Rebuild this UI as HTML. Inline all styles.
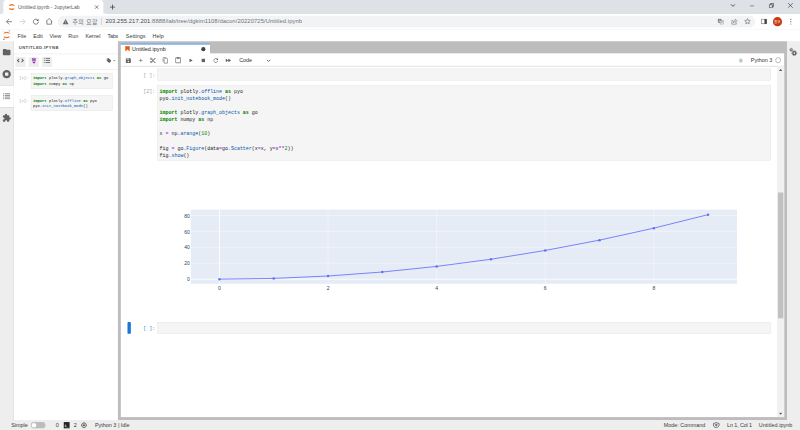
<!DOCTYPE html>
<html lang="ko">
<head>
<meta charset="utf-8">
<title>Untitled.ipynb - JupyterLab</title>
<style>
html,body{margin:0;padding:0;background:#fff;overflow:hidden;}
body{width:800px;height:430px;position:relative;}
#root{position:absolute;left:0;top:0;width:1920px;height:1032px;transform:scale(0.4166667);transform-origin:0 0;background:#fff;overflow:hidden;
 font-family:"Liberation Sans","Noto Sans CJK KR",sans-serif;font-size:13px;color:#212121;}
#root *{box-sizing:border-box;}
.abs{position:absolute;}
.t{position:absolute;white-space:nowrap;line-height:1;}
/* chrome */
#tabstrip{left:0;top:0;width:1920px;height:34px;background:#dee1e6;}
#ctab{left:8px;top:0;width:240px;height:34px;background:#fff;border-radius:8px 8px 0 0;}
#ctoolbar{left:0;top:34px;width:1920px;height:37px;background:#fff;border-bottom:1px solid #e4e6e9;}
#omni{left:139px;top:38px;width:1673px;height:28px;border-radius:14px;background:#f1f3f4;}
/* jlab */
#menubar{left:0;top:71px;width:1920px;height:28px;background:#fff;}
.mi{top:80px;font-size:13px;color:#3c3c3c;}
#lside{left:0;top:99px;width:33px;height:909px;background:#eeeeee;border-right:1px solid #bdbdbd;}
#rside{left:1889px;top:99px;width:31px;height:909px;background:#eeeeee;}
#lpanel{left:33px;top:99px;width:250px;height:909px;background:#fff;}
#dock{left:283px;top:99px;width:1606px;height:909px;background:#bdbdbd;}
#nbpanel{left:290px;top:128px;width:1592px;height:873px;background:#fff;}
#status{left:0;top:1008px;width:1920px;height:24px;background:#eeeeee;}
.st{top:1014px;font-size:13px;color:#3a3a3a;}
.mono{font-family:"Liberation Mono",monospace;}
.code{position:absolute;white-space:pre;font-family:"Liberation Mono",monospace;font-size:11.9px;line-height:17px;color:#212121;letter-spacing:0;}
.k{color:#008000;font-weight:bold;}
.o{color:#aa22ff;font-weight:bold;}
.p{color:#0055aa;}
.n{color:#008800;}
.tcode{position:absolute;white-space:pre;font-family:"Liberation Mono",monospace;font-size:9.15px;line-height:13.700px;color:#212121;}
.cellbox{position:absolute;background:#f5f5f5;border:1px solid #e3e3e3;}
.prompt{position:absolute;white-space:pre;font-family:"Liberation Mono",monospace;font-size:11.9px;line-height:17px;color:#9e9e9e;}
</style>
</head>
<body>
<div id="root">
<!-- CHROME-BEGIN -->
<div class="abs" id="tabstrip"></div>
<div class="abs" id="ctab"></div>
<!-- tab curves -->
<svg class="abs" style="left:0;top:26px" width="8" height="8"><path d="M8 0 V8 H0 A8 8 0 0 0 8 0Z" fill="#fff"/></svg>
<svg class="abs" style="left:248px;top:26px" width="8" height="8"><path d="M0 0 V8 H8 A8 8 0 0 1 0 0Z" fill="#fff"/></svg>
<!-- favicon: jupyter -->
<svg class="abs" style="left:20px;top:9px" width="16" height="16" viewBox="0 0 16 16">
 <path d="M0.600 6 A7.700 7.700 0 0 1 15.400 6 Q8 2.700 0.600 6Z" fill="#f37726"/>
 <path d="M0.600 10 A7.700 7.700 0 0 0 15.400 10 Q8 13.300 0.600 10Z" fill="#f37726"/>
</svg>
<div class="t" style="left:43px;top:11px;font-size:12px;color:#50545a;letter-spacing:0.200px">Untitled.ipynb - JupyterLab</div>
<svg class="abs" style="left:225px;top:10px" width="14" height="14" viewBox="0 0 14 14"><path d="M3 3 L11 11 M11 3 L3 11" stroke="#3c4043" stroke-width="1.5" fill="none"/></svg>
<svg class="abs" style="left:262px;top:9px" width="16" height="16" viewBox="0 0 16 16"><path d="M8 2 V14 M2 8 H14" stroke="#3c4043" stroke-width="1.8" fill="none"/></svg>
<!-- window controls -->
<svg class="abs" style="left:1752px;top:7px" width="14" height="12" viewBox="0 0 14 12"><path d="M2.200 3.500 L7 8.300 L11.800 3.500" stroke="#303336" stroke-width="1.900" fill="none"/></svg>
<svg class="abs" style="left:1799px;top:8px" width="12" height="12" viewBox="0 0 12 12"><path d="M1 6 H11" stroke="#3c4043" stroke-width="1.2" fill="none"/></svg>
<svg class="abs" style="left:1845px;top:7px" width="13" height="13" viewBox="0 0 14 14"><path d="M1.5 4.5 H9.5 V12.5 H1.5Z M4.5 4.5 V1.5 H12.5 V9.5 H9.5" stroke="#202124" stroke-width="1.4" fill="none"/></svg>
<svg class="abs" style="left:1890px;top:6px" width="14" height="14" viewBox="0 0 14 14"><path d="M1.5 1.5 L12.5 12.5 M12.5 1.5 L1.5 12.5" stroke="#202124" stroke-width="1.4" fill="none"/></svg>
<div class="abs" id="ctoolbar"></div>
<!-- nav icons -->
<svg class="abs" style="left:13px;top:43px" width="18" height="18" viewBox="0 0 18 18"><path d="M16 9 H3 M9 2.5 L2.5 9 L9 15.5" stroke="#5f6368" stroke-width="1.8" fill="none"/></svg>
<svg class="abs" style="left:45px;top:43px" width="18" height="18" viewBox="0 0 18 18"><path d="M2 9 H15 M9 2.5 L15.5 9 L9 15.5" stroke="#c4c7c9" stroke-width="1.8" fill="none"/></svg>
<svg class="abs" style="left:77px;top:43px" width="18" height="18" viewBox="0 0 18 18"><path d="M15 9 A6 6 0 1 1 12.800 4.400" stroke="#5f6368" stroke-width="2" fill="none"/><path d="M15.5 2 V7.5 H10Z" fill="#5f6368"/></svg>
<svg class="abs" style="left:109px;top:42px" width="18" height="18" viewBox="0 0 18 18"><path d="M3.5 8.5 V16 H14.5 V8.5 M1.5 9.5 L9 2.5 L16.5 9.5" stroke="#5f6368" stroke-width="1.8" fill="none"/></svg>
<div class="abs" id="omni"></div>
<svg class="abs" style="left:150px;top:45px" width="15" height="14" viewBox="0 0 15 14"><path d="M7.5 0.5 L14.8 13.5 H0.2Z" fill="#5f6368"/><path d="M7.5 5 V9.2 M7.5 10.4 V12" stroke="#f1f3f4" stroke-width="1.4"/></svg>
<div class="t" style="left:174px;top:43px;font-size:14px;line-height:18px;color:#6e7276;letter-spacing:1.100px">주의 요함</div>
<div class="abs" style="left:243px;top:43px;width:1px;height:17px;background:#a8acb1"></div>
<div class="t" style="left:253px;top:43px;font-size:14px;line-height:16px;letter-spacing:0.19px;color:#45494d">203.255.217.201<span style="color:#6f7479">:8888/lab/tree/dgkim1108/dacon/20220725/Untitled.ipynb</span></div>
<!-- omnibox right icons -->
<svg class="abs" style="left:1722px;top:44px" width="15" height="15" viewBox="0 0 18 18" opacity="0.850"><rect x="1" y="1.5" width="10" height="11" fill="#5f6368"/><rect x="7.5" y="6" width="9.5" height="11" fill="#f1f3f4" stroke="#5f6368" stroke-width="1.3"/><path d="M9.5 9 H15 M12.2 9 V8 M10 14.5 C12.5 13.5 13.8 11.5 14 9.3 M10.5 10.5 C11.2 12.5 12.8 13.8 15 14.5" stroke="#5f6368" stroke-width="1" fill="none"/><path d="M3.5 10.5 L6 4 L8.5 10.5 M4.3 8.5 H7.7" stroke="#f1f3f4" stroke-width="1.1" fill="none"/></svg>
<svg class="abs" style="left:1754px;top:43px" width="17" height="17" viewBox="0 0 18 18"><path d="M6 6.500 H2.500 V16 H14 V12.500" stroke="#5f6368" stroke-width="1.300" fill="none"/><path d="M5.5 12.5 C6 8.5 8.5 6.5 11.5 6.3 V3 L16.5 7.8 L11.5 12.3 V9.2 C9 9.2 7 10.2 5.5 12.5Z" stroke="#5f6368" stroke-width="1.200" fill="none"/></svg>
<svg class="abs" style="left:1786px;top:43px" width="16" height="16" viewBox="0 0 18 18"><path d="M9 1.8 L11.2 6.7 L16.5 7.2 L12.5 10.8 L13.7 16 L9 13.2 L4.3 16 L5.5 10.8 L1.5 7.2 L6.8 6.7Z" stroke="#5f6368" stroke-width="1.6" fill="none" stroke-linejoin="round"/></svg>
<svg class="abs" style="left:1826px;top:45px" width="15" height="13" viewBox="0 0 18 16"><rect x="1" y="1" width="16" height="14" rx="1.5" stroke="#3c4043" stroke-width="1.8" fill="none"/><rect x="10.5" y="1" width="6.5" height="14" fill="#3c4043"/></svg>
<div class="abs" style="left:1855px;top:41px;width:22px;height:22px;border-radius:11px;background:#c9390f;"></div>
<div class="t" style="left:1858px;top:48px;font-size:8px;color:#fff;letter-spacing:0">동규</div>
<svg class="abs" style="left:1895px;top:44px" width="6" height="16" viewBox="0 0 6 16"><circle cx="3" cy="2.500" r="1.350" fill="#5f6368"/><circle cx="3" cy="8" r="1.350" fill="#5f6368"/><circle cx="3" cy="13.500" r="1.350" fill="#5f6368"/></svg>
<!-- CHROME-END -->
<!-- JLAB-BEGIN -->
<div class="abs" id="menubar"></div>
<!-- jupyter logo -->
<svg class="abs" style="left:6px;top:72px" width="20" height="24" viewBox="0 0 20 22" preserveAspectRatio="none">
 <path d="M2.2 8.6 A8 6.2 0 0 1 17.8 8.6 A10.5 4.2 0 0 0 2.2 8.6Z" fill="#f37726"/>
 <path d="M2.2 13.6 A8 6.2 0 0 0 17.8 13.6 A10.5 4.2 0 0 1 2.2 13.6Z" fill="#f37726"/>
 <circle cx="16.2" cy="1.8" r="1.3" fill="#767677"/><circle cx="3.4" cy="20.2" r="1.6" fill="#616262"/><circle cx="2.6" cy="3.4" r="0.9" fill="#989798"/>
</svg>
<div class="t mi" style="left:42px">File</div>
<div class="t mi" style="left:80px">Edit</div>
<div class="t mi" style="left:119px">View</div>
<div class="t mi" style="left:164px">Run</div>
<div class="t mi" style="left:205px;letter-spacing:-0.3px">Kernel</div>
<div class="t mi" style="left:258px;letter-spacing:-0.5px">Tabs</div>
<div class="t mi" style="left:302px">Settings</div>
<div class="t mi" style="left:366px">Help</div>
<!-- left sidebar -->
<div class="abs" id="lside"></div>
<div class="abs" style="left:0;top:204px;width:33px;height:54px;background:#fff;border-top:1px solid #bdbdbd;border-bottom:1px solid #bdbdbd;"></div>
<svg class="abs" style="left:5px;top:114px" width="22" height="22" viewBox="0 0 24 24"><path fill="#616161" d="M10 4H4c-1.1 0-1.99.9-1.99 2L2 18c0 1.1.9 2 2 2h16c1.1 0 2-.9 2-2V8c0-1.1-.9-2-2-2h-8l-2-2z"/></svg>
<svg class="abs" style="left:4px;top:166px" width="24" height="24" viewBox="0 0 24 24"><path fill="#616161" d="M12 2C6.48 2 2 6.48 2 12s4.48 10 10 10 10-4.48 10-10S17.52 2 12 2zm4 14H8V8h8v8z"/></svg>
<svg class="abs" style="left:7px;top:223px" width="18" height="16" viewBox="0 0 18 16"><path d="M4.500 2 H17.500 M4.500 6 H17.500 M4.500 10 H17.500 M4.500 14 H17.500" stroke="#616161" stroke-width="1.700"/><path d="M0.500 2 H2.800 M0.500 6 H2.800 M0.500 10 H2.800 M0.500 14 H2.800" stroke="#616161" stroke-width="1.700"/></svg>
<svg class="abs" style="left:5px;top:272px" width="22" height="22" viewBox="0 0 24 24"><path fill="#616161" d="M20.500 11H19V7c0-1.100-.9-2-2-2h-4V3.500C13 2.120 11.880 1 10.500 1S8 2.120 8 3.500V5H4c-1.100 0-1.990.9-1.990 2v3.800H3.500c1.490 0 2.700 1.210 2.700 2.700s-1.210 2.700-2.700 2.700H2V20c0 1.100.9 2 2 2h3.800v-1.500c0-1.490 1.210-2.700 2.700-2.700 1.490 0 2.700 1.210 2.700 2.700V22H17c1.100 0 2-.9 2-2v-4h1.500c1.380 0 2.500-1.120 2.500-2.500S21.880 11 20.500 11z"/></svg>
<!-- left panel (toc) -->
<div class="abs" id="lpanel"></div>
<div class="t" style="left:45px;top:109.500px;font-size:10px;font-weight:bold;letter-spacing:0.950px;color:#505050">UNTITLED.IPYNB</div>
<div class="abs" style="left:33px;top:128.500px;width:250px;height:1px;background:#e0e0e0"></div>
<div class="abs" style="left:37px;top:136.500px;width:24px;height:24px;background:#eeeeee"></div>
<div class="abs" style="left:69px;top:136.500px;width:24px;height:24px;background:#eeeeee"></div>
<div class="abs" style="left:101px;top:136.500px;width:24px;height:24px;background:#eeeeee"></div>
<svg class="abs" style="left:40px;top:138px" width="18" height="14" viewBox="0 0 18 14"><path d="M6.200 3 L2.200 7 L6.200 11 M11.800 3 L15.800 7 L11.800 11" stroke="#616161" stroke-width="2.500" fill="none"/></svg>
<div class="t" style="left:77px;top:140.300px;font-size:8px;font-weight:bold;color:#8e24aa;-webkit-text-stroke:0.250px #8e24aa;transform:scaleX(1.350);transform-origin:0 0">M</div>
<svg class="abs" style="left:76.500px;top:147.300px" width="9.500" height="6.500" viewBox="0 0 8 6" preserveAspectRatio="none"><path d="M0 0.300 H8 L4 5.700Z" fill="#8e24aa"/></svg>
<svg class="abs" style="left:104px;top:138px" width="17" height="14" viewBox="0 0 17 14"><path d="M5.500 2 H16 M5.500 7 H16 M5.500 12 H16" stroke="#616161" stroke-width="2.200"/><path d="M1 2 H3.300 M1 7 H3.300 M1 12 H3.300" stroke="#616161" stroke-width="2.200"/></svg>
<svg class="abs" style="left:255px;top:139px" width="13" height="13" viewBox="0 0 24 24"><path fill="#616161" d="M21.410 11.580l-9-9C12.050 2.220 11.550 2 11 2H4c-1.100 0-2 .9-2 2v7c0 .55.220 1.050.590 1.420l9 9c.36.360.860.580 1.410.580.550 0 1.050-.22 1.410-.59l7-7c.370-.36.590-.860.590-1.410 0-.55-.23-1.060-.59-1.420zM5.500 7C4.670 7 4 6.330 4 5.500S4.670 4 5.500 4 7 4.670 7 5.500 6.330 7 5.500 7z"/></svg>
<svg class="abs" style="left:271px;top:144px" width="6.500" height="4" viewBox="0 0 8 5"><path d="M0.500 0.500 H7.500 L4 4.500Z" fill="#757575"/></svg>
<div class="abs" style="left:33px;top:166.500px;width:250px;height:1px;background:#e0e0e0"></div>
<!-- toc cells -->
<div class="tcode" style="left:46px;top:180px;color:#9e9e9e">[1]:</div>
<div class="cellbox" style="left:74px;top:175.500px;width:196px;height:37.500px"></div>
<div class="tcode" style="left:79px;top:180px"><span class="k">import</span> plotly<span class="o">.</span><span class="p">graph_objects</span> <span class="k">as</span> go
<span class="k">import</span> numpy <span class="k">as</span> np</div>
<div class="tcode" style="left:46px;top:234.500px;color:#9e9e9e">[2]:</div>
<div class="cellbox" style="left:74px;top:228.500px;width:196px;height:37.500px"></div>
<div class="tcode" style="left:79px;top:234.500px"><span class="k">import</span> plotly<span class="o">.</span><span class="p">offline</span> <span class="k">as</span> pyo
pyo<span class="o">.</span><span class="p">init_notebook_mode</span>()</div>
<!-- dock -->
<div class="abs" id="dock"></div>
<div class="abs" style="left:290px;top:104px;width:214px;height:26px;background:#fff;border-top:3px solid #5b9bd9;"></div>
<svg class="abs" style="left:300px;top:110px" width="12" height="13" viewBox="0 0 12 13"><rect x="0" y="0" width="12" height="13" fill="#f39a5e"/><path d="M1.800 1.800 H10.200 V11.500 L6 7.800 L1.800 11.500Z" fill="#e8590c"/><path d="M2.200 13 L6 9.600 L9.800 13Z" fill="#fff"/></svg>
<div class="t" style="left:317px;top:111px;font-size:13px;letter-spacing:0.15px;color:#212121">Untitled.ipynb</div>
<div class="abs" style="left:483px;top:113px;width:10px;height:10px;border-radius:5px;background:#424242"></div>
<div class="abs" id="nbpanel"></div>
<div class="abs" style="left:290px;top:158px;width:1592px;height:1px;background:#d8d8d8;box-shadow:0 1px 2px rgba(0,0,0,0.15)"></div>
<!-- nb toolbar icons -->
<svg class="abs" style="left:300px;top:137px" width="16" height="16" viewBox="0 0 24 24"><path fill="#616161" d="M17 3H5c-1.110 0-2 .9-2 2v14c0 1.100.890 2 2 2h14c1.100 0 2-.9 2-2V7l-4-4zm-5 16c-1.660 0-3-1.340-3-3s1.340-3 3-3 3 1.340 3 3-1.340 3-3 3zm3-10H5V5h10v4z"/></svg>
<svg class="abs" style="left:330px;top:137px" width="16" height="16" viewBox="0 0 24 24"><path fill="#616161" d="M19 13h-6v6h-2v-6H5v-2h6V5h2v6h6v2z"/></svg>
<svg class="abs" style="left:359px;top:137px" width="16" height="16" viewBox="0 0 24 24"><path fill="#616161" d="M9.640 7.640c.23-.5.360-1.050.360-1.640 0-2.210-1.790-4-4-4S2 3.790 2 6s1.790 4 4 4c.59 0 1.140-.13 1.640-.36L10 12l-2.360 2.360C7.140 14.130 6.590 14 6 14c-2.210 0-4 1.790-4 4s1.790 4 4 4 4-1.790 4-4c0-.59-.13-1.140-.36-1.640L12 14l7 7h3v-1L9.640 7.640zM6 8c-1.100 0-2-.89-2-2s.9-2 2-2 2 .89 2 2-.9 2-2 2zm0 12c-1.100 0-2-.89-2-2s.9-2 2-2 2 .89 2 2-.9 2-2 2zm6-7.500c-.28 0-.5-.22-.5-.5s.22-.5.5-.5.5.22.5.5-.22.5-.5.5zM19 3l-6 6 2 2 7-7V3h-3z"/></svg>
<svg class="abs" style="left:389px;top:137px" width="16" height="16" viewBox="0 0 18 18"><path fill="#616161" d="M11.900 1H3.200c-.8 0-1.500.7-1.500 1.500v10.200h1.500V2.500h8.700V1zm2.200 2.900h-8c-.8 0-1.500.7-1.500 1.500v10.200c0 .8.700 1.500 1.500 1.500h8c.8 0 1.500-.7 1.500-1.500V5.400c0-.8-.7-1.500-1.500-1.500zm0 11.600h-8V5.400h8v10.100z"/></svg>
<svg class="abs" style="left:419px;top:136px" width="17" height="17" viewBox="0 0 24 24"><path fill="#616161" d="M19 2h-4.180C14.400.84 13.300 0 12 0c-1.300 0-2.400.84-2.820 2H5c-1.100 0-2 .9-2 2v16c0 1.100.9 2 2 2h14c1.100 0 2-.9 2-2V4c0-1.100-.9-2-2-2zm-7 0c.55 0 1 .45 1 1s-.45 1-1 1-1-.45-1-1 .45-1 1-1zm7 18H5V4h2v3h10V4h2v16z"/></svg>
<svg class="abs" style="left:454px;top:140px" width="9" height="10" viewBox="0 0 9 10"><path d="M0.500 0.500 L8.500 5 L0.500 9.500Z" fill="#616161"/></svg>
<div class="abs" style="left:484px;top:141px;width:8px;height:8px;background:#616161"></div>
<svg class="abs" style="left:510px;top:137px" width="16" height="16" viewBox="0 0 18 18"><path fill="#616161" d="M9 13.500c-2.490 0-4.500-2.010-4.500-4.500S6.510 4.500 9 4.500c1.240 0 2.360.52 3.170 1.330L10 8h5V3l-1.760 1.760C12.150 3.680 10.660 3 9 3 5.690 3 3.010 5.690 3.010 9S5.690 15 9 15c2.970 0 5.430-2.160 5.900-5h-1.520c-.46 2-2.240 3.500-4.380 3.500z"/></svg>
<svg class="abs" style="left:541px;top:140px" width="14" height="10" viewBox="0 0 14 10"><path d="M0.500 0.500 L7 5 L0.500 9.500Z M7 0.500 L13.500 5 L7 9.500Z" fill="#616161"/></svg>
<div class="t" style="left:574px;top:138px;font-size:13px;color:#333">Code</div>
<svg class="abs" style="left:639px;top:142px" width="11" height="7" viewBox="0 0 11 7"><path d="M1 1 L5.500 5.500 L10 1" stroke="#424242" stroke-width="1.800" fill="none"/></svg>
<svg class="abs" style="left:1771px;top:138px" width="14" height="14" viewBox="0 0 24 24"><path fill="#c4c4c4" d="M20 8h-2.810c-.45-.78-1.070-1.450-1.820-1.960L17 4.410 15.590 3l-2.170 2.170C12.960 5.060 12.490 5 12 5c-.49 0-.96.060-1.410.17L8.410 3 7 4.410l1.620 1.630C7.880 6.550 7.260 7.220 6.810 8H4v2h2.090c-.05.33-.09.66-.09 1v1H4v2h2v1c0 .34.040.67.090 1H4v2h2.810c1.040 1.790 2.970 3 5.190 3s4.150-1.210 5.190-3H20v-2h-2.090c.05-.33.090-.66.090-1v-1h2v-2h-2v-1c0-.34-.04-.67-.09-1H20V8z"/></svg>
<div class="t" style="left:1802px;top:138px;font-size:13px;color:#333">Python 3</div>
<div class="abs" style="left:1861px;top:138px;width:13px;height:13px;border-radius:7px;border:1.500px solid #616161"></div>
<!-- notebook scrollbar -->
<div class="abs" style="left:1865px;top:159px;width:17px;height:842px;background:#f1f1f1"></div>
<div class="abs" style="left:1867px;top:462px;width:13px;height:302px;background:#c1c1c1"></div>
<svg class="abs" style="left:1869px;top:165px" width="9" height="6" viewBox="0 0 9 6"><path d="M0.500 5.500 H8.500 L4.500 0.500Z" fill="#505050"/></svg>
<svg class="abs" style="left:1869px;top:990px" width="9" height="6" viewBox="0 0 9 6"><path d="M0.500 0.500 H8.500 L4.500 5.500Z" fill="#505050"/></svg>
<!-- cells -->
<div class="prompt" style="left:344px;top:172.500px">[ ]:</div>
<div class="cellbox" style="left:378px;top:165px;width:1472px;height:28px"></div>
<div class="prompt" style="left:344px;top:212.500px">[2]:</div>
<div class="cellbox" style="left:378px;top:205px;width:1472px;height:180px"></div>
<div class="code" style="left:383px;top:212px"><span class="k">import</span> plotly<span class="o">.</span><span class="p">offline</span> <span class="k">as</span> pyo
pyo<span class="o">.</span><span class="p">init_notebook_mode</span>()

<span class="k">import</span> plotly<span class="o">.</span><span class="p">graph_objects</span> <span class="k">as</span> go
<span class="k">import</span> numpy <span class="k">as</span> np

x <span class="o">=</span> np<span class="o">.</span><span class="p">arange</span>(<span class="n">10</span>)

fig <span class="o">=</span> go<span class="o">.</span><span class="p">Figure</span>(data<span class="o">=</span>go<span class="o">.</span><span class="p">Scatter</span>(x<span class="o">=</span>x, y<span class="o">=</span>x<span class="o">**</span><span class="n">2</span>))
fig<span class="o">.</span><span class="p">show</span>()</div>
<!-- PLOT-BEGIN -->
<svg class="abs" style="left:418px;top:493px" width="1351" height="218" viewBox="-40 0 1351 218" font-family="Liberation Sans, sans-serif" font-size="12" fill="#2a3f5f">
<rect x="0" y="10" width="1311" height="178" fill="#e5ecf6"/>
<path d="M329.3 10 V188" stroke="#fff" stroke-width="1"/>
<path d="M589.9 10 V188" stroke="#fff" stroke-width="1"/>
<path d="M850.5 10 V188" stroke="#fff" stroke-width="1"/>
<path d="M1111.1 10 V188" stroke="#fff" stroke-width="1"/>
<path d="M0 138.8 H1311" stroke="#fff" stroke-width="1"/>
<path d="M0 100.5 H1311" stroke="#fff" stroke-width="1"/>
<path d="M0 62.2 H1311" stroke="#fff" stroke-width="1"/>
<path d="M0 24.0 H1311" stroke="#fff" stroke-width="1"/>
<path d="M68.7 10 V188" stroke="#fff" stroke-width="2"/>
<path d="M0 177.0 H1311" stroke="#fff" stroke-width="2"/>
<polyline points="68.7,177.0 199.0,175.1 329.3,169.4 459.6,159.8 589.9,146.4 720.2,129.2 850.5,108.1 980.8,83.3 1111.1,54.6 1241.4,22.1" fill="none" stroke="#636efa" stroke-width="2"/>
<circle cx="68.7" cy="177.0" r="3" fill="#636efa"/>
<circle cx="199.0" cy="175.1" r="3" fill="#636efa"/>
<circle cx="329.3" cy="169.4" r="3" fill="#636efa"/>
<circle cx="459.6" cy="159.8" r="3" fill="#636efa"/>
<circle cx="589.9" cy="146.4" r="3" fill="#636efa"/>
<circle cx="720.2" cy="129.2" r="3" fill="#636efa"/>
<circle cx="850.5" cy="108.1" r="3" fill="#636efa"/>
<circle cx="980.8" cy="83.3" r="3" fill="#636efa"/>
<circle cx="1111.1" cy="54.6" r="3" fill="#636efa"/>
<circle cx="1241.4" cy="22.1" r="3" fill="#636efa"/>
<text x="-2.500" y="182.2" text-anchor="end">0</text>
<text x="-2.500" y="143.9" text-anchor="end">20</text>
<text x="-2.500" y="105.7" text-anchor="end">40</text>
<text x="-2.500" y="67.5" text-anchor="end">60</text>
<text x="-2.500" y="29.2" text-anchor="end">80</text>
<text x="68.7" y="202.2" text-anchor="middle">0</text>
<text x="329.3" y="202.2" text-anchor="middle">2</text>
<text x="589.9" y="202.2" text-anchor="middle">4</text>
<text x="850.5" y="202.2" text-anchor="middle">6</text>
<text x="1111.1" y="202.2" text-anchor="middle">8</text>
</svg>
<!-- PLOT-END -->
<!-- active cell -->
<div class="abs" style="left:306px;top:773px;width:8px;height:28px;background:#1976d2;border-radius:2px"></div>
<div class="prompt" style="left:344px;top:780.500px;color:#307fc1">[ ]:</div>
<div class="cellbox" style="left:378px;top:773px;width:1472px;height:28px"></div>
<!-- right sidebar -->
<div class="abs" id="rside"></div>
<svg class="abs" style="left:1893px;top:113px" width="22" height="22" viewBox="0 0 22 22"><circle cx="6" cy="6.500" r="2.300" fill="none" stroke="#616161" stroke-width="2.200"/><circle cx="6" cy="6.500" r="3.700" fill="none" stroke="#616161" stroke-width="1.400" stroke-dasharray="1.660 1.246"/><circle cx="13.300" cy="14.500" r="3.600" fill="none" stroke="#616161" stroke-width="3.200"/><circle cx="13.300" cy="14.500" r="5.700" fill="none" stroke="#616161" stroke-width="2" stroke-dasharray="2.600 1.877"/></svg>
<!-- status bar -->
<div class="abs" id="status"></div>
<div class="t st" style="left:27px">Simple</div>
<div class="abs" style="left:74px;top:1013px;width:35px;height:15px;border-radius:8px;background:#bdbdbd"></div>
<div class="abs" style="left:76px;top:1015px;width:11px;height:11px;border-radius:6px;background:#fff"></div>
<div class="t st" style="left:134px">0</div>
<div class="abs" style="left:153px;top:1013px;width:14px;height:15px;background:#212121"></div>
<div class="t" style="left:155px;top:1018px;font-size:8px;color:#fff;font-family:'Liberation Mono',monospace">$_</div>
<div class="t st" style="left:177px">2</div>
<svg class="abs" style="left:194px;top:1013px" width="15" height="15" viewBox="0 0 24 24"><circle cx="12" cy="12" r="9" fill="none" stroke="#424242" stroke-width="2.500"/><circle cx="12" cy="12" r="3.500" fill="#424242"/><path d="M12 1 V6 M12 18 V23 M1 12 H6 M18 12 H23" stroke="#424242" stroke-width="2.500"/></svg>
<div class="t st" style="left:228px">Python 3 | Idle</div>
<div class="t st" style="left:1593px">Mode: Command</div>
<svg class="abs" style="left:1710px;top:1013px" width="18" height="15" viewBox="0 0 24 24" preserveAspectRatio="none"><path d="M12 2 L3 5.500 V11 C3 16.500 7 20.500 12 22 C17 20.500 21 16.500 21 11 V5.500Z" fill="none" stroke="#424242" stroke-width="2.400"/><path d="M7.500 9 H16.500 M9 13 H15 M12 9 V17" stroke="#424242" stroke-width="2"/></svg>
<div class="t st" style="left:1745px;letter-spacing:-0.3px">Ln 1, Col 1</div>
<div class="t st" style="left:1821px;letter-spacing:0.15px">Untitled.ipynb</div>
<!-- JLAB-END -->
</div>
</body>
</html>
